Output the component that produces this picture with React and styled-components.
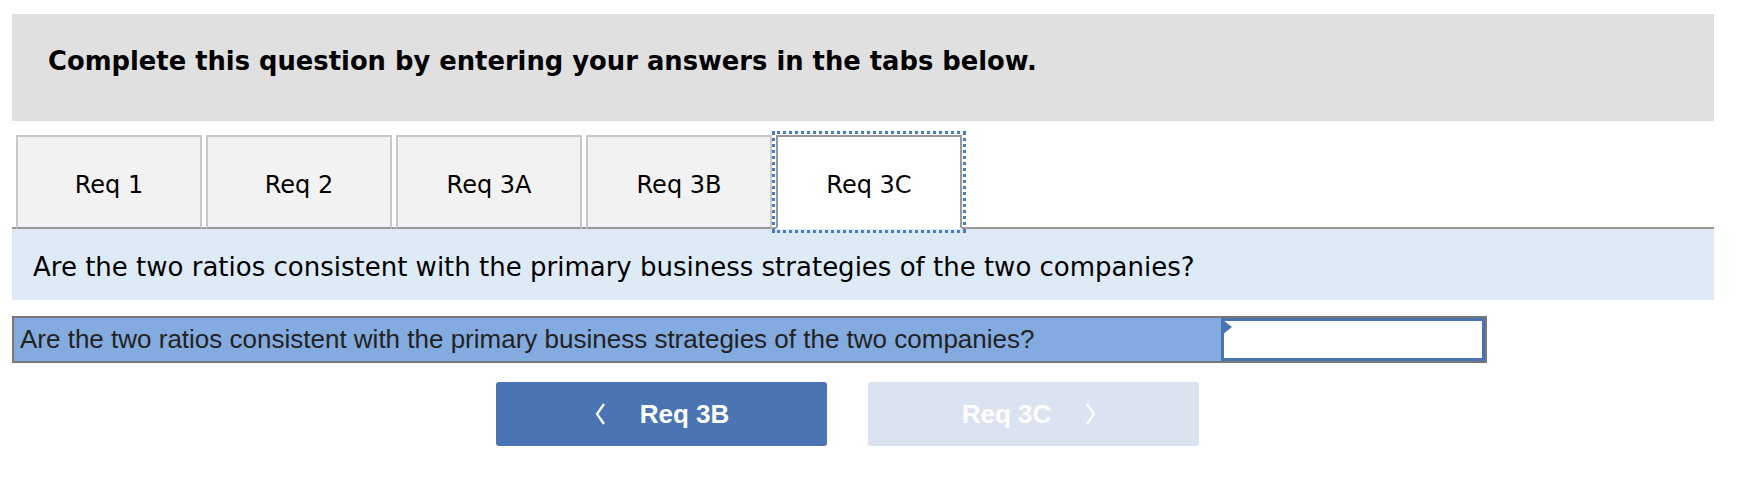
import styled, { createGlobalStyle } from "styled-components";

const GlobalStyle = createGlobalStyle`
  html, body {
    margin: 0;
    padding: 0;
    background: #ffffff;
  }
  body {
    font-family: "DejaVu Sans", Verdana, sans-serif;
    color: #000;
  }
`;

const Page = styled.div`
  width: 1702px;
  padding: 14px 0 0 12px;
`;

const Instructions = styled.div`
  background: #e0e0e0;
  height: 107px;
  box-sizing: border-box;
  padding: 32px 0 0 36px;
  font-size: 25.8px;
  font-weight: bold;
`;

const TabRow = styled.div`
  display: flex;
  gap: 4px;
  margin-top: 14px;
  padding-left: 4px;
  border-bottom: 2px solid #999999;
`;

const Tab = styled.div`
  width: 186px;
  height: 94px;
  box-sizing: border-box;
  display: flex;
  align-items: center;
  justify-content: center;
  padding-top: 6px;
  font-size: 24px;
  margin-bottom: -2px;
  background: ${(p) => (p.$active ? "#ffffff" : "#f2f2f2")};
  border: 2px solid ${(p) => (p.$active ? "#999999" : "#c8c8c8")};
  border-bottom: ${(p) => (p.$active ? "2px solid #ffffff" : "2px solid #999999")};
  outline: ${(p) => (p.$active ? "3px dotted #4a7cc4" : "none")};
  outline-offset: 1px;
`;

const Prompt = styled.div`
  background: #deebf7;
  height: 71px;
  box-sizing: border-box;
  padding: 23px 0 0 21px;
  font-size: 26px;
`;

const AnswerRow = styled.div`
  display: flex;
  width: 1475px;
  height: 47px;
  box-sizing: border-box;
  margin-top: 16px;
  border: 2px solid #777777;
`;

const AnswerLabel = styled.div`
  flex: 1;
  background: #84abe0;
  color: #222222;
  font-family: "Liberation Sans", Arial, sans-serif;
  font-size: 26px;
  display: flex;
  align-items: center;
  padding-left: 6px;
`;

const AnswerInput = styled.div`
  width: 264px;
  background: #ffffff;
  border: 3px solid #4a72b0;
  box-sizing: border-box;
  position: relative;

  &::before {
    content: "";
    position: absolute;
    left: -1px;
    top: -1px;
    border-left: 9px solid #4a72b0;
    border-top: 7px solid transparent;
    border-bottom: 7px solid transparent;
  }
`;

const Nav = styled.div`
  display: flex;
  gap: 41px;
  margin-top: 19px;
  padding-left: 484px;
`;

const NavButton = styled.div`
  width: 331px;
  height: 64px;
  border-radius: 3px;
  display: flex;
  align-items: center;
  justify-content: center;
  gap: 34px;
  padding-right: ${(p) => (p.$disabled ? "8px" : "0")};
  box-sizing: border-box;
  font-family: "Liberation Sans", Arial, sans-serif;
  font-weight: bold;
  font-size: 26px;
  color: #ffffff;
  background: ${(p) => (p.$disabled ? "#dae3ef" : "#4a74b4")};
`;

const Chevron = styled.svg`
  width: 12px;
  height: 24px;
`;

const ChevronLeft = () => (
  <Chevron viewBox="0 0 12 24">
    <path d="M10 2 L3 12 L10 22" fill="none" stroke="#fff" strokeWidth="2.2" />
  </Chevron>
);

const ChevronRight = () => (
  <Chevron viewBox="0 0 12 24">
    <path d="M2 2 L9 12 L2 22" fill="none" stroke="#fff" strokeWidth="2.2" />
  </Chevron>
);

const tabs = ["Req 1", "Req 2", "Req 3A", "Req 3B", "Req 3C"];

export default function App() {
  const question =
    "Are the two ratios consistent with the primary business strategies of the two companies?";
  return (
    <>
      <GlobalStyle />
      <Page>
        <Instructions>Complete this question by entering your answers in the tabs below.</Instructions>
        <TabRow>
          {tabs.map((t) => (
            <Tab key={t} $active={t === "Req 3C"}>
              {t}
            </Tab>
          ))}
        </TabRow>
        <Prompt>{question}</Prompt>
        <AnswerRow>
          <AnswerLabel>{question}</AnswerLabel>
          <AnswerInput />
        </AnswerRow>
        <Nav>
          <NavButton>
            <ChevronLeft />
            <span>Req 3B</span>
          </NavButton>
          <NavButton $disabled>
            <span>Req 3C</span>
            <ChevronRight />
          </NavButton>
        </Nav>
      </Page>
    </>
  );
}
